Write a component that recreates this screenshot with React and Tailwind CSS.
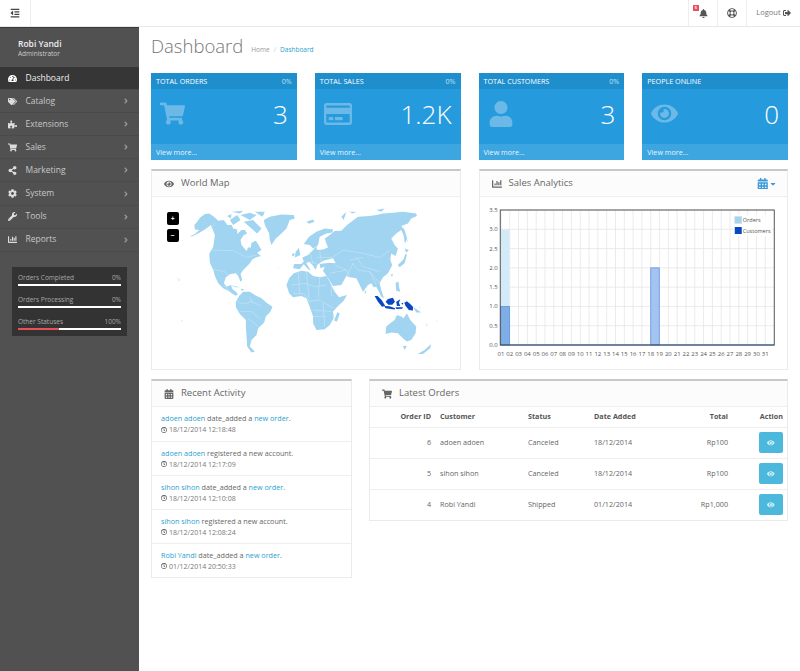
import {
  FaAngleRight, FaBell, FaCalendarAlt, FaCaretDown, FaChartBar, FaCog, FaEye, FaOutdent,
  FaPuzzlePiece, FaRegClock, FaRegCreditCard, FaRegLifeRing, FaShareAlt, FaShoppingCart, FaSignOutAlt,
  FaTachometerAlt, FaTags, FaUser, FaWrench,
} from 'react-icons/fa';

const menu = [
  { label: 'Dashboard', icon: FaTachometerAlt, active: true },
  { label: 'Catalog', icon: FaTags },
  { label: 'Extensions', icon: FaPuzzlePiece },
  { label: 'Sales', icon: FaShoppingCart },
  { label: 'Marketing', icon: FaShareAlt },
  { label: 'System', icon: FaCog },
  { label: 'Tools', icon: FaWrench },
  { label: 'Reports', icon: FaChartBar },
];

const stats = [
  { title: 'TOTAL ORDERS', pct: '0%', value: '3', icon: FaShoppingCart, size: 'text-[25px]' },
  { title: 'TOTAL SALES', pct: '0%', value: '1.2K', icon: FaRegCreditCard, size: 'text-[28px]' },
  { title: 'TOTAL CUSTOMERS', pct: '0%', value: '3', icon: FaUser, size: 'text-[26px]' },
  { title: 'PEOPLE ONLINE', pct: '', value: '0', icon: FaEye, size: 'text-[27px]' },
];

const activity = [
  { who: 'adoen adoen', what: 'date_added a ', link: 'new order', when: '18/12/2014 12:18:48' },
  { who: 'adoen adoen', what: 'registered a new account.', when: '18/12/2014 12:17:09' },
  { who: 'sihon sihon', what: 'date_added a ', link: 'new order', when: '18/12/2014 12:10:08' },
  { who: 'sihon sihon', what: 'registered a new account.', when: '18/12/2014 12:08:24' },
  { who: 'Robi Yandi', what: 'date_added a ', link: 'new order', when: '01/12/2014 20:50:33' },
];

const orders = [
  { id: 6, customer: 'adoen adoen', status: 'Canceled', date: '18/12/2014', total: 'Rp100' },
  { id: 5, customer: 'sihon sihon', status: 'Canceled', date: '18/12/2014', total: 'Rp100' },
  { id: 4, customer: 'Robi Yandi', status: 'Shipped', date: '01/12/2014', total: 'Rp1,000' },
];

const progress = [
  { label: 'Orders Completed', pct: '0%' },
  { label: 'Orders Processing', pct: '0%' },
  { label: 'Other Statuses', pct: '100%', red: true },
];

const Panel = ({ icon: Icon, title, right, className, children }) => (
  <div className={`border border-[#ebebeb] border-t-2 border-t-[#c8c8c8] bg-white ${className || ''}`}>
    <div className="flex h-[26px] items-center justify-between border-b border-[#eeeeee] bg-[#fcfcfc] pl-3 pr-3">
      <div className="flex items-center gap-[7px] text-[9.5px] text-[#666666]">
        <Icon className="text-[10px] text-[#666666]" />
        <span>{title}</span>
      </div>
      {right}
    </div>
    {children}
  </div>
);

const Sidebar = () => (
  <aside className="flex w-[139px] shrink-0 flex-col border-t border-[#3a3a3a] bg-[#515151]">
    <div className="flex h-[39px] flex-col justify-center pl-[18px] text-white">
      <span className="text-[8.5px] font-semibold leading-[11px] text-[#f0f0f0]">Robi Yandi</span>
      <span className="text-[6.5px] leading-[9px] text-[#cccccc]">Administrator</span>
    </div>
    <nav>
      {menu.map((item) => (
        <div
          key={item.label}
          className={`flex h-[23.1px] items-center border-b border-[#4a4a4a] pl-2 pr-[9px] text-[8.5px] ${
            item.active ? 'bg-[#363636] text-[#eeeeee]' : 'text-[#c8c8c8]'
          }`}
        >
          <span className="flex w-[17.5px] items-center">
            <item.icon className={`text-[9px] ${item.active ? 'text-white' : 'text-[#dddddd]'}`} />
          </span>
          <span className="flex-1">{item.label}</span>
          {!item.active && <FaAngleRight className="text-[8px] text-[#999999]" />}
        </div>
      ))}
    </nav>
    <div className="ml-3 mt-[15px] flex h-[69px] w-[115px] flex-col justify-between bg-[#333333] px-[6px] pb-[6px] pt-[6px]">
      {progress.map((p) => (
        <div key={p.label}>
          <div className="flex justify-between text-[6.5px] leading-[9px] text-[#a8a8a8]">
            <span>{p.label}</span>
            <span>{p.pct}</span>
          </div>
          <div className="mt-[2px] h-[2px] bg-white">
            {p.red && <div className="h-full w-[40%] bg-[#e8505b]" />}
          </div>
        </div>
      ))}
    </div>
  </aside>
);

const StatCard = ({ title, pct, value, icon: Icon, size }) => (
  <div className="flex h-[87px] flex-col bg-[#259bdd] text-white">
    <div className="flex h-[16px] items-center justify-between bg-[#1f8ecd] px-[5px] pt-[1px] text-[7.2px]">
      <span>{title}</span>
      <span className="text-[#bfe0f4]">{pct}</span>
    </div>
    <div className="flex flex-1 items-center justify-between pb-[6px] pl-[9px] pr-[9px]">
      <Icon className={`${size} text-[#6cb9e8]`} />
      <span className="text-[26px] font-light leading-none">{value}</span>
    </div>
    <div className="flex h-[16px] items-center bg-[#3da6e1] px-[5px] pt-[1px] text-[7.2px] text-[#e8f5fc]">View more...</div>
  </div>
);

// hand traced outlines, in 3x screen units
const land = [
  '118,200 135,192 148,180 135,178 133,165 142,155 150,143 165,132 178,130 192,140 205,152 222,150 232,165 245,165 250,175 262,178 262,192 275,180 285,180 292,190 282,195 272,210 275,225 290,243 295,232 303,232 305,218 318,212 328,228 335,240 322,248 333,258 318,262 308,268 300,280 290,290 280,300 272,312 277,330 272,335 265,318 258,310 240,313 228,322 222,340 230,350 243,345 248,358 258,365 264,372 258,377 245,370 235,362 220,355 205,340 195,318 190,300 180,278 178,252 190,230 195,195 183,165 165,178 148,188 130,198',
  '258,395 268,378 280,365 300,365 315,375 335,385 350,398 368,410 362,425 348,440 343,458 325,475 320,495 305,510 300,530 315,545 305,548 292,530 290,500 288,470 288,450 270,432 258,412',
  '342,150 360,140 395,133 432,135 435,145 420,150 410,175 395,190 378,205 365,225 360,210 358,190 345,165',
  '410,345 418,325 432,310 455,302 475,305 490,318 510,322 530,318 540,335 555,365 568,382 592,375 582,392 565,408 550,425 552,445 540,465 525,478 500,480 490,460 490,440 480,410 470,385 455,378 430,382 418,370',
  '553,452 563,427 570,430 562,455',
  '430,295 433,282 455,282 462,275 458,262 475,255 490,240 500,228 502,240 520,238 535,232 530,220 525,205 540,195 555,183 575,182 592,165 605,155 625,140 660,138 680,135 700,130 730,128 760,125 800,130 802,138 785,145 775,160 755,168 765,180 775,215 762,195 755,180 740,190 725,205 735,225 745,235 738,258 725,250 722,270 728,285 715,310 700,322 690,340 695,360 703,385 695,380 688,365 680,350 672,352 665,340 655,345 640,365 630,345 620,325 600,322 590,318 575,345 550,348 535,325 520,302 525,290 512,295 510,282 540,278 558,280 550,265 520,272 502,285 498,300 488,285 478,275 470,280 484,303 474,296 462,283 450,298',
  '462,222 478,200 500,185 525,175 550,178 548,187 530,190 510,200 505,225 490,235 480,225',
  '438,245 447,233 452,255 435,262',
  '428,250 436,250 432,258 426,257',
  '470,155 490,148 494,155 478,161',
  '708,492 710,470 722,460 735,450 742,435 755,440 762,445 772,430 782,450 800,470 798,490 785,510 772,515 760,505 745,490 725,488',
  '760,528 772,528 765,540',
  '805,552 825,540 845,522 842,535 820,552',
  '745,285 762,268 768,250 772,255 765,280 750,292',
  '765,235 778,240 770,248',
  '762,195 770,198 770,218 765,215',
  '738,338 747,335 748,350 752,365 740,362',
  '724,312 730,312 727,322',
  '645,360 650,365 646,372',
  '790,410 815,428 800,428',
  '240,345 270,352 258,352',
  '272,356 285,358 275,362',
  '240,150 262,135 272,150 250,165',
  '272,135 300,128 320,135 300,150',
  '282,155 310,150 335,175 322,190 305,175',
  '245,125 280,122 270,130',
  '315,125 345,125 338,140',
  '232,138 245,132 243,145',
  '598,125 620,125 610,130',
  '680,120 705,115 695,125',
  '575,140 590,125 582,150',
];

// tiny far away islands, very pale in the picture
const specks = ['82,322 92,330 85,335', '92,448 100,452 94,456', '808,408 815,412 810,416', '828,458 836,466 830,470', '858,450 864,454 860,458', '385,290 390,292 386,295'];

const indonesia = [
  '675,378 684,378 696,390 707,408 697,410 685,395',
  '704,408 720,409 737,415 735,419 708,415',
  '708,395 715,387 730,383 736,395 728,404 716,404',
  '740,395 752,388 748,398 752,408 742,408',
  '755,400 761,398 760,404',
  '738,412 760,412 758,416 740,417',
  '764,398 772,394 782,402 790,410 790,422 778,420 768,408',
];

const borders = [
  '175,185 195,160',
  '180,240 250,242 290,262 320,255',
  '190,298 225,305 240,320',
  '220,345 245,368',
  '262,395 285,402 305,395 335,408',
  '270,425 305,425 330,445',
  '295,445 325,470',
  '300,380 308,400',
  '425,345 465,340 495,350 530,345',
  '430,370 465,372 480,395',
  '470,395 510,390 550,415',
  '490,440 530,440',
  '510,322 505,385',
  '470,305 478,385',
  '445,305 450,370',
  '520,400 525,470',
  '490,420 545,425',
  '545,345 545,380',
  '470,275 500,280',
  '480,245 490,280',
  '510,245 515,275',
  '500,262 550,262 580,240 640,250 690,262 722,240',
  '620,262 640,290 690,305',
  '590,318 610,280 625,300 660,305 690,340',
  '555,285 590,300 600,320',
  '660,305 680,345',
  '600,270 640,262',
  '540,310 590,300',
];

const WorldMap = () => (
  <div className="relative h-[172px]">
    <svg viewBox="6 81 924 516" className="h-full w-full">
      {land.map((points) => (
        <polygon key={points} points={points} fill="#a0d4f1" />
      ))}
      {specks.map((points) => (
        <polygon key={points} points={points} fill="#dff1fb" />
      ))}
      {borders.map((points) => (
        <polyline key={points} points={points} fill="none" stroke="#cfe9f8" strokeWidth="1.6" />
      ))}
      {indonesia.map((points) => (
        <polygon key={points} points={points} fill="#0a47c2" />
      ))}
    </svg>
    <div className="absolute left-[14.5px] top-[15px] flex flex-col gap-[4.5px]">
      <div className="flex h-[12.5px] w-[12.5px] items-center justify-center rounded-[2px] bg-black text-[7px] font-bold leading-none text-white">+</div>
      <div className="flex h-[12.5px] w-[12.5px] items-center justify-center rounded-[2px] bg-black text-[7px] font-bold leading-none text-white">−</div>
    </div>
  </div>
);

const X0 = 500.7;
const STEP = 8.81;
const BASE = 345;
const UNIT = 38.57;

const Chart = () => {
  const days = Array.from({ length: 31 }, (_, i) => String(i + 1).padStart(2, '0'));
  const ticks = [0, 0.5, 1, 1.5, 2, 2.5, 3, 3.5];
  return (
    <svg viewBox="480 197 307 172" className="block h-[172px] w-full font-['Open_Sans',sans-serif]">
      {days.map((d, i) => (
        <line key={d} x1={X0 + STEP * i} x2={X0 + STEP * i} y1="210" y2={BASE} stroke="#e6e6e6" strokeWidth="0.8" />
      ))}
      {ticks.map((t) => (
        <line key={t} x1="500" x2="774" y1={BASE - t * UNIT} y2={BASE - t * UNIT} stroke="#e6e6e6" strokeWidth="0.8" />
      ))}
      <rect x="500.5" y={BASE - 3 * UNIT} width="8.8" height={3 * UNIT} fill="#d3ebf9" />
      <rect x="500.5" y={BASE - UNIT} width="8.8" height={UNIT} fill="#7fade6" stroke="#5e93e0" strokeWidth="0.8" />
      <rect x={650.5} y={BASE - 2 * UNIT} width="8.5" height={2 * UNIT} fill="#a2c4ef" stroke="#5e93e0" strokeWidth="0.8" />
      <line x1="500" x2="774" y1={BASE} y2={BASE} stroke="#3f7fd8" strokeWidth="1" />
      <rect x="500" y="210" width="274" height="135" fill="none" stroke="#444444" strokeWidth="0.9" />
      {ticks.map((t) => (
        <text key={t} x="497.5" y={BASE - t * UNIT + 2} textAnchor="end" fontSize="6" fill="#555555">{t.toFixed(1)}</text>
      ))}
      {days.map((d, i) => (
        <text key={d} x={X0 + STEP * i} y="355.5" textAnchor="middle" fontSize="6" fill="#555555">{d}</text>
      ))}
      <rect x="733" y="215" width="39" height="21" fill="#ffffff" opacity="0.85" />
      <rect x="734.5" y="216.5" width="7" height="7" fill="#a0d4f1" stroke="#dddddd" strokeWidth="0.7" />
      <rect x="734.5" y="227" width="7" height="7" fill="#0a47c2" />
      <text x="742.5" y="222" fontSize="5.5" fill="#555555">Orders</text>
      <text x="742.5" y="232.5" fontSize="5.5" fill="#555555">Customers</text>
    </svg>
  );
};

const RecentActivity = () => (
  <Panel icon={FaCalendarAlt} title="Recent Activity" className="w-[201px] shrink-0 self-start">
    {activity.map((a, i) => (
      <div key={a.when} className={`flex h-[34px] flex-col justify-center pl-[9px] ${i > 0 ? 'border-t border-[#eeeeee]' : ''}`}>
        <p className="text-[7.2px] leading-[11px] text-[#666666]">
          <span className="text-[#2a9fd0]">{a.who}</span> {a.what}
          {a.link && <span className="text-[#2a9fd0]">{a.link}</span>}
          {a.link && '.'}
        </p>
        <p className="flex items-center gap-[2px] text-[7px] leading-[11px] text-[#777777]">
          <FaRegClock className="text-[6px] text-[#444444]" />
          {a.when}
        </p>
      </div>
    ))}
  </Panel>
);

const LatestOrders = () => (
  <Panel icon={FaShoppingCart} title="Latest Orders" className="flex-1 self-start">
    <table className="w-full table-fixed text-[7.2px] text-[#666666]">
      <thead>
        <tr className="h-[20px] text-[#555555]">
          <th className="w-[66px] pr-[5px] text-right font-bold">Order ID</th>
          <th className="w-[92px] pl-[4px] text-left font-bold">Customer</th>
          <th className="w-[66px] text-left font-bold">Status</th>
          <th className="w-[70px] text-left font-bold">Date Added</th>
          <th className="w-[64px] text-right font-bold">Total</th>
          <th className="pr-[4px] text-right font-bold">Action</th>
        </tr>
      </thead>
      <tbody>
        {orders.map((o) => (
          <tr key={o.id} className="h-[31px] border-t border-[#eeeeee]">
            <td className="pr-[5px] text-right">{o.id}</td>
            <td className="pl-[4px]">{o.customer}</td>
            <td>{o.status}</td>
            <td>{o.date}</td>
            <td className="text-right">{o.total}</td>
            <td className="pr-[4px]">
              <div className="ml-auto flex h-[21px] w-[24px] items-center justify-center rounded-[2px] bg-[#4cb8dc]">
                <FaEye className="text-[7.5px] text-[#d8f0f8]" />
              </div>
            </td>
          </tr>
        ))}
      </tbody>
    </table>
  </Panel>
);

export default function App() {
  return (
    <div className="flex h-[671px] w-[800px] flex-col overflow-hidden bg-white font-['Open_Sans',sans-serif]">
      <header className="flex h-[27px] shrink-0 items-stretch justify-between border-b border-[#e8e8e8] bg-white">
        <div className="flex w-[31px] items-center justify-center border-r border-[#eeeeee]">
          <FaOutdent className="text-[10px] text-[#444444]" />
        </div>
        <div className="flex">
          <div className="relative flex w-[29px] items-center justify-center border-l border-[#eeeeee]">
            <FaBell className="text-[9px] text-[#555555]" />
            <span className="absolute left-[4px] top-[5px] flex h-[6px] w-[6px] items-center justify-center bg-[#e8505b] text-[4px] font-bold leading-none text-white">5</span>
          </div>
          <div className="flex w-[29px] items-center justify-center border-l border-[#eeeeee]">
            <FaRegLifeRing className="text-[10px] text-[#555555]" />
          </div>
          <div className="flex w-[54px] items-center justify-center gap-[2px] border-l border-[#eeeeee] text-[7.5px] text-[#777777]">
            Logout <FaSignOutAlt className="text-[8px] text-[#555555]" />
          </div>
        </div>
      </header>
      <div className="flex min-h-0 flex-1">
        <Sidebar />
        <main className="flex-1 px-3">
          <div className="mb-[8px] flex h-[38px] items-center gap-2">
            <h1 className="text-[18.5px] font-light leading-none text-[#777777]">Dashboard</h1>
            <div className="flex gap-[4px] pt-[7px] text-[6.5px] text-[#999999]">
              <span>Home</span>
              <span className="text-[#cccccc]">/</span>
              <span className="text-[#2a9fd0]">Dashboard</span>
            </div>
          </div>
          <div className="grid grid-cols-4 gap-[18px]">
            {stats.map((s) => (
              <StatCard key={s.title} {...s} />
            ))}
          </div>
          <div className="mt-[9px] grid grid-cols-2 gap-[18px]">
            <Panel icon={FaEye} title="World Map">
              <WorldMap />
            </Panel>
            <Panel
              icon={FaChartBar}
              title="Sales Analytics"
              right={
                <div className="-mr-[2px] flex items-center gap-[1px] text-[#3a9ad9]">
                  <FaCalendarAlt className="text-[11.5px]" />
                  <FaCaretDown className="text-[8px]" />
                </div>
              }
            >
              <Chart />
            </Panel>
          </div>
          <div className="mt-[9px] flex gap-[17px]">
            <RecentActivity />
            <LatestOrders />
          </div>
        </main>
      </div>
    </div>
  );
}
